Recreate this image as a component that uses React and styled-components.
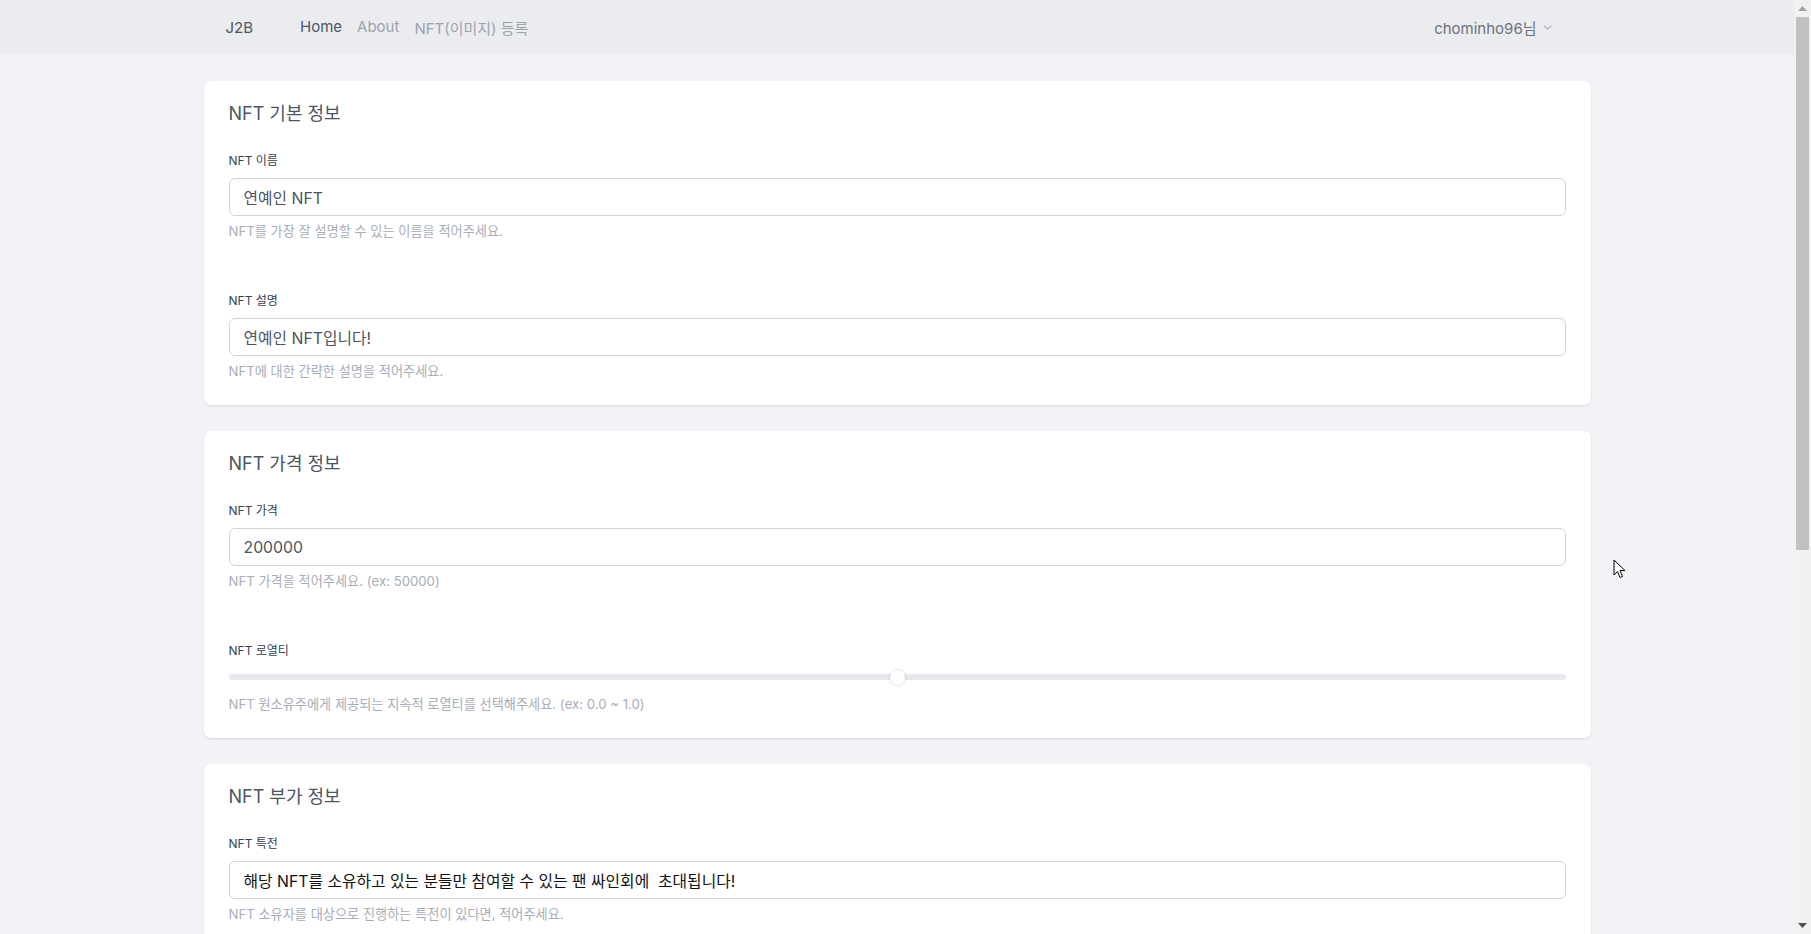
import React from "react";
import styled, { createGlobalStyle } from "styled-components";
import { ChevronDown } from "lucide-react";

const Global = createGlobalStyle`
  * { box-sizing: border-box; }
  html, body { margin: 0; padding: 0; }
  html { overflow-x: hidden; }
  body {
    background: #f3f3f7;
    font-family: "Inter", "Noto Sans CJK KR", "Noto Sans", sans-serif;
    color: #4b5563;
    padding-right: 17px;
  }
`;

const Header = styled.header`
  height: 54px;
  background: #ebecf0;
  display: flex;
  justify-content: center;
`;

const HeaderInner = styled.div`
  width: 1387px;
  display: flex;
  align-items: center;
  padding: 0 37px 0 22px;
`;

const Logo = styled.div`
  font-size: 15px;
  color: #4b5563;
  margin-right: 47px;
`;

const Nav = styled.nav`
  display: flex;
  gap: 15px;
  flex: 1;
`;

const NavLink = styled.a`
  font-size: 15px;
  color: ${(p) => (p.$active ? "#4b5563" : "#9ca3af")};
  text-decoration: none;
`;

const UserMenu = styled.div`
  display: flex;
  align-items: center;
  gap: 4px;
  font-size: 15px;
  color: #6b7280;
`;

const Main = styled.main`
  display: flex;
  flex-direction: column;
  align-items: center;
  gap: 26px;
  padding: 27px 0 60px;
`;

const Card = styled.section`
  width: 1387px;
  background: #fff;
  border-radius: 7px;
  box-shadow: 0 1px 3px rgba(0, 0, 0, 0.08), 0 1px 2px rgba(0, 0, 0, 0.04);
  padding: 21px 25px 25px;
  display: flex;
  flex-direction: column;
`;

const CardTitle = styled.h2`
  margin: 0 0 27px;
  font-size: 18px;
  line-height: 24px;
  font-weight: 400;
  color: #4b5563;
`;

const Field = styled.div`
  display: flex;
  flex-direction: column;
  & + & {
    margin-top: 53px;
  }
`;

const Label = styled.label`
  font-size: 12px;
  line-height: 16px;
  color: #374151;
  margin-bottom: 9px;
`;

const Input = styled.input`
  height: 38px;
  border: 1px solid #d1d5db;
  border-radius: 6px;
  padding: 0 14px;
  font-family: inherit;
  font-size: 15.8px;
  color: ${(p) => (p.$dark ? "#111111" : "#4b5563")};
  background: #fff;
  outline: none;
`;

const Help = styled.p`
  margin: 6px 0 0;
  font-size: 13.2px;
  line-height: 18px;
  color: #a8adb7;
`;

const SliderWrap = styled.div`
  position: relative;
  height: 20px;
  margin-top: -1px;
  display: flex;
  align-items: center;
`;

const Track = styled.div`
  width: 100%;
  height: 6px;
  border-radius: 3px;
  background: #e8e9ee;
`;

const Thumb = styled.div`
  position: absolute;
  top: 50%;
  width: 15px;
  height: 15px;
  margin-left: -7.5px;
  margin-top: -7.5px;
  border-radius: 50%;
  background: #fff;
  box-shadow: 0 0 3px rgba(0, 0, 0, 0.22);
`;

const SliderHelp = styled(Help)`
  margin-top: 8px;
`;

const SubmitRow = styled.div`
  display: flex;
  justify-content: flex-end;
  margin-top: 40px;
`;

const Button = styled.button`
  height: 38px;
  padding: 0 20px;
  border: none;
  border-radius: 6px;
  background: #4f46e5;
  color: #fff;
  font-family: inherit;
  font-size: 14px;
`;

/* browser scrollbar drawn over the page edge */
const ScrollBar = styled.div`
  position: fixed;
  top: 0;
  right: 0;
  width: 17px;
  height: 100vh;
  background: #f1f1f1;
  display: flex;
  flex-direction: column;
`;

const ScrollArrow = styled.div`
  height: 17px;
  display: flex;
  align-items: center;
  justify-content: center;
  flex-shrink: 0;
`;

const ScrollTrack = styled.div`
  flex: 1;
  display: flex;
  flex-direction: column;
`;

const ScrollThumb = styled.div`
  margin: 0 2px;
  height: 533px;
  background: #c1c1c1;
`;

const Cursor = styled.svg`
  position: fixed;
  left: 1613px;
  top: 559px;
`;

function Slider({ value }) {
  return (
    <SliderWrap>
      <Track />
      <Thumb style={{ left: `${value * 100}%` }} />
    </SliderWrap>
  );
}

export default function App() {
  return (
    <>
      <Global />
      <Header>
        <HeaderInner>
          <Logo>J2B</Logo>
          <Nav>
            <NavLink $active>Home</NavLink>
            <NavLink>About</NavLink>
            <NavLink>NFT(이미지) 등록</NavLink>
          </Nav>
          <UserMenu>
            chominho96님
            <ChevronDown size={13} strokeWidth={1.5} />
          </UserMenu>
        </HeaderInner>
      </Header>
      <Main>
        <Card>
          <CardTitle>NFT 기본 정보</CardTitle>
          <Field>
            <Label>NFT 이름</Label>
            <Input defaultValue="연예인 NFT" />
            <Help>NFT를 가장 잘 설명할 수 있는 이름을 적어주세요.</Help>
          </Field>
          <Field>
            <Label>NFT 설명</Label>
            <Input defaultValue="연예인 NFT입니다!" />
            <Help>NFT에 대한 간략한 설명을 적어주세요.</Help>
          </Field>
        </Card>
        <Card>
          <CardTitle>NFT 가격 정보</CardTitle>
          <Field>
            <Label>NFT 가격</Label>
            <Input defaultValue="200000" />
            <Help>NFT 가격을 적어주세요. (ex: 50000)</Help>
          </Field>
          <Field>
            <Label>NFT 로열티</Label>
            <Slider value={0.5} />
            <SliderHelp>NFT 원소유주에게 제공되는 지속적 로열티를 선택해주세요. (ex: 0.0 ~ 1.0)</SliderHelp>
          </Field>
        </Card>
        <Card>
          <CardTitle>NFT 부가 정보</CardTitle>
          <Field>
            <Label>NFT 특전</Label>
            <Input $dark defaultValue="해당 NFT를 소유하고 있는 분들만 참여할 수 있는 팬 싸인회에  초대됩니다!" />
            <Help>NFT 소유자를 대상으로 진행하는 특전이 있다면, 적어주세요.</Help>
          </Field>
          <Field>
            <Label>NFT 카테고리</Label>
            <Input defaultValue="연예인" />
            <Help>NFT의 카테고리를 적어주세요.</Help>
          </Field>
        </Card>
        <Card>
          <CardTitle>NFT 이미지</CardTitle>
          <Field>
            <Label>NFT 이미지 파일</Label>
            <Input defaultValue="" />
            <Help>NFT로 등록할 이미지를 선택해주세요.</Help>
          </Field>
          <SubmitRow>
            <Button>등록하기</Button>
          </SubmitRow>
        </Card>
      </Main>
      <ScrollBar>
        <ScrollArrow>
          <svg width="9" height="5" viewBox="0 0 9 5">
            <path d="M0 5 L4.5 0 L9 5 Z" fill="#a3a3a3" />
          </svg>
        </ScrollArrow>
        <ScrollTrack>
          <ScrollThumb />
        </ScrollTrack>
        <ScrollArrow>
          <svg width="9" height="5" viewBox="0 0 9 5">
            <path d="M0 0 L4.5 5 L9 0 Z" fill="#505050" />
          </svg>
        </ScrollArrow>
      </ScrollBar>
      <Cursor width="13" height="20" viewBox="0 0 13 20">
        <path
          d="M1 1 L1 16 L4.5 12.5 L7 18.5 L9.5 17.5 L7 11.5 L12 11.5 Z"
          fill="#fff"
          stroke="#000"
          strokeWidth="1"
          strokeLinejoin="round"
        />
      </Cursor>
    </>
  );
}
